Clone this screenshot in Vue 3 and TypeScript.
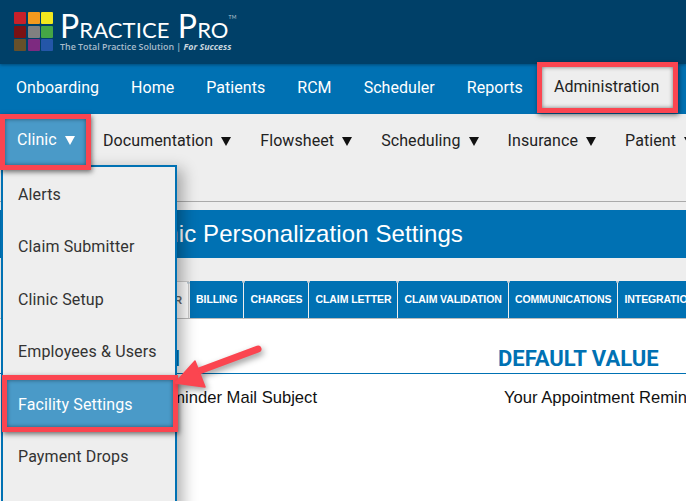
<script setup lang="ts">
const swatches: string[] = ['#c8202a', '#f39a1e', '#f2e81e', '#7a1214', '#808080', '#45a645', '#66502a', '#7d2a80', '#2456a8']
const mainNav: string[] = ['Onboarding', 'Home', 'Patients', 'RCM', 'Scheduler', 'Reports']
const subNav: string[] = ['Documentation', 'Flowsheet', 'Scheduling', 'Insurance', 'Patient']
const menu: string[] = ['Alerts', 'Claim Submitter', 'Clinic Setup', 'Employees & Users']
const tabs: string[] = ['BILLING', 'CHARGES', 'CLAIM LETTER', 'CLAIM VALIDATION', 'COMMUNICATIONS', 'INTEGRATION']
</script>

<template>
  <div class="page">
    <header class="brand">
      <div class="swatches">
        <span v-for="c in swatches" :key="c" class="swatch" :style="{ background: c }"></span>
      </div>
      <div class="wordmark">
        <div class="name">Practice Pro<sup>TM</sup></div>
        <div class="tagline">The Total Practice Solution | <em>For Success</em></div>
      </div>
    </header>

    <nav class="main-nav">
      <a v-for="n in mainNav" :key="n" class="main-item">{{ n }}</a>
      <a class="main-item admin">Administration</a>
    </nav>

    <nav class="sub-nav">
      <a class="sub-item clinic">Clinic<span class="caret"></span></a>
      <a v-for="n in subNav" :key="n" class="sub-item">{{ n }}<span class="caret"></span></a>
    </nav>

    <section class="content">
      <h1 class="title">Clinic Personalization Settings</h1>
      <div class="tabs">
        <a class="tab active">REMINDER</a>
        <a v-for="t in tabs" :key="t" class="tab">{{ t }}</a>
      </div>
      <div class="table">
        <div class="thead">
          <span class="col-a">DESCRIPTION</span>
          <span class="col-b">DEFAULT VALUE</span>
        </div>
        <div class="trow">
          <span class="col-a">Reminder Mail Subject</span>
          <span class="col-b">Your Appointment Reminder</span>
        </div>
      </div>
    </section>

    <ul class="dropdown">
      <li v-for="m in menu" :key="m" class="drop-item">{{ m }}</li>
      <li class="drop-item selected">Facility Settings</li>
      <li class="drop-item">Payment Drops</li>
    </ul>

    <svg class="arrow" width="110" height="60" viewBox="0 0 110 60" aria-hidden="true">
      <path d="M83 6 L24 28" fill="none" stroke="#fb4550" stroke-width="7" stroke-linecap="round" />
      <path d="M0 40 L20 18 L30 44 Z" fill="#fb4550" stroke="#fb4550" stroke-width="1.5" stroke-linejoin="round" />
    </svg>
  </div>
</template>

<style>
html, body { margin: 0; padding: 0; overflow: hidden; background: #fff; }
</style>

<style scoped>
.page {
  position: relative;
  width: 686px;
  height: 501px;
  overflow: hidden;
  background: #fff;
  font-family: Roboto, "Liberation Sans", sans-serif;
}
.brand {
  height: 64px;
  box-sizing: border-box;
  background: #004068;
  display: flex;
  align-items: flex-start;
  padding: 11px 0 0 14px;
  gap: 7px;
  position: relative;
  z-index: 1;
  box-shadow: 0 1px 3px rgba(0, 0, 0, 0.35);
}
.swatches {
  display: grid;
  grid-template-columns: repeat(3, 12px);
  grid-auto-rows: 12px;
  gap: 1.5px;
  margin-top: 1px;
}
.swatch { display: block; border-radius: 1px; }
.wordmark { color: #fff; width: 190px; }
.name {
  font-family: Lato, "Liberation Sans", sans-serif;
  font-variant: small-caps;
  font-size: 32px;
  line-height: 30px;
  letter-spacing: 0.1px;
  white-space: nowrap;
}
.name sup {
  font-size: 5px;
  font-variant: normal;
  vertical-align: 19px;
  line-height: 0;
  color: #bcc8d2;
}
.tagline {
  font-family: "Open Sans", sans-serif;
  font-size: 8.9px;
  line-height: 11px;
  font-weight: 600;
  color: #a9bccb;
  white-space: nowrap;
}
.tagline em { font-weight: 700; color: #c9d6df; }
.main-nav {
  height: 50px;
  background: #0071b3;
  display: flex;
  align-items: stretch;
}
.main-item {
  padding: 0 16px;
  font-size: 16px;
  letter-spacing: 0.04px;
  line-height: 47px;
  color: #fff;
  white-space: nowrap;
}
.main-item.admin {
  position: relative;
  z-index: 2;
  width: 141px;
  box-sizing: border-box;
  margin: -2px 0 0 -2px;
  height: 51px;
  line-height: 40px;
  background: #eee;
  color: #222;
  border: 5px solid #fb4550;
  padding-left: 12px;
  letter-spacing: 0.08px;
  box-shadow: 1px 2px 5px rgba(0, 0, 0, 0.55), inset 0 0 4px rgba(0, 0, 0, 0.5);
}
.sub-nav {
  height: 88px;
  box-sizing: border-box;
  background: #eee;
  border-bottom: 1px solid #aaa;
  box-shadow: 0 1px 2px rgba(0, 0, 0, 0.2);
  display: flex;
  align-items: flex-start;
  white-space: nowrap;
}
.sub-item {
  flex: none;
  display: flex;
  align-items: center;
  height: 53px;
  padding: 0 13px 0 16px;
  font-size: 16px;
  letter-spacing: 0.08px;
  color: #222;
}
.caret {
  flex: none;
  width: 0;
  height: 0;
  margin: 1px 0 0 8px;
  border-left: 5.5px solid transparent;
  border-right: 5.5px solid transparent;
  border-top: 9px solid #111;
}
.sub-item.clinic {
  box-sizing: border-box;
  width: 91px;
  height: 56px;
  margin-right: -4px;
  padding: 0 0 5px 12px;
  background: #4a9ac8;
  color: #fff;
  border: 5px solid #fb4550;
  box-shadow: 1px 2px 5px rgba(0, 0, 0, 0.55), inset 0 0 4px rgba(0, 0, 0, 0.45);
  position: relative;
  z-index: 3;
}
.clinic .caret { border-top-color: #fff; }
.content {
  background: #eee;
  padding-top: 8px;
}
.title {
  margin: 0;
  height: 48px;
  background: #0071b3;
  color: #fff;
  font-family: "Liberation Sans", Arial, sans-serif;
  font-size: 24px;
  letter-spacing: 0.1px;
  font-weight: 400;
  line-height: 48px;
  padding-left: 137px;
  white-space: nowrap;
}
.tabs {
  display: flex;
  margin-top: 23px;
  height: 38px;
  box-sizing: border-box;
  border-bottom: 1px solid #bbb;
  padding-left: 90px;
  white-space: nowrap;
}
.tab {
  flex: none;
  position: relative;
  box-sizing: border-box;
  padding: 0 6.1px;
  margin-right: 1px;
  background: #0071b3;
  color: #fff;
  font-family: "Liberation Sans", Arial, sans-serif;
  font-size: 10.5px;
  font-weight: 700;
  line-height: 36px;
  letter-spacing: -0.1px;
}
.tab::after {
  content: "";
  position: absolute;
  right: -2px;
  top: 0;
  width: 3px;
  height: 2px;
  border-radius: 0 0 2px 2px;
  background: #b9c6cf;
  z-index: 1;
}
.tab.active {
  width: 99px;
  background: #fff;
  color: #666;
  border: 1px solid #ccc;
  border-bottom: 0;
  text-align: right;
  padding-right: 6px;
}
.table { background: #fff; height: 183px; padding-top: 27px; box-sizing: border-box; }
.thead {
  display: flex;
  height: 28px;
  box-sizing: border-box;
  border-bottom: 1px solid #0071b3;
  color: #0071b3;
  font-family: Roboto, sans-serif;
  font-weight: 700;
  font-size: 22px;
  line-height: 25px;
  white-space: nowrap;
}
.trow {
  display: flex;
  padding-top: 15px;
  font-family: "Liberation Sans", Arial, sans-serif;
  font-size: 16.6px;
  line-height: 18px;
  color: #111;
  white-space: nowrap;
}
.col-a { flex: none; box-sizing: border-box; width: 498px; text-align: right; padding-right: 181px; }
.thead .col-a { padding-right: 318px; }
.col-b { flex: none; }
.trow .col-b { padding-left: 6px; }
.dropdown {
  position: absolute;
  left: 1px;
  top: 165px;
  width: 176px;
  height: 350px;
  box-sizing: border-box;
  margin: 0;
  padding: 3px 0 0;
  list-style: none;
  background: #eee;
  border: 2px solid #0071b3;
  box-shadow: 6px 4px 14px rgba(0, 0, 0, 0.3);
  z-index: 2;
}
.drop-item {
  height: 52.4px;
  line-height: 49px;
  padding-left: 15px;
  font-size: 16px;
  letter-spacing: 0.13px;
  color: #333;
  white-space: nowrap;
}
.drop-item.selected {
  box-sizing: border-box;
  width: 176px;
  height: 57px;
  margin: -4.6px -2px 0.5px -1px;
  line-height: 50px;
  padding-left: 11px;
  background: #4a9ac8;
  color: #fff;
  border: 5px solid #fb4550;
  box-shadow: 1px 2px 5px rgba(0, 0, 0, 0.55), inset 0 0 4px rgba(0, 0, 0, 0.45);
  position: relative;
}
.arrow {
  position: absolute;
  left: 175px;
  top: 343px;
  z-index: 4;
  filter: drop-shadow(2px 3px 3px rgba(0, 0, 0, 0.4));
}
</style>
